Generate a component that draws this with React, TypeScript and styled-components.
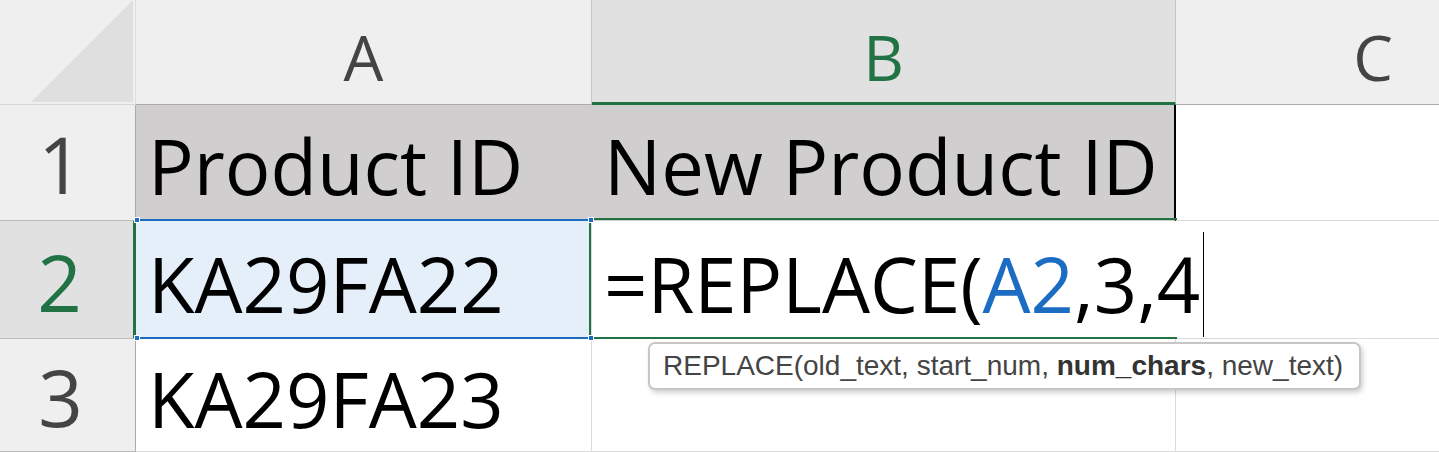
import styled, { createGlobalStyle } from "styled-components";

const GlobalStyle = createGlobalStyle`
  html, body {
    margin: 0;
    padding: 0;
    background: #ffffff;
    overflow: hidden;
  }
  * {
    box-sizing: border-box;
  }
`;

const GREEN = "#217346";
const BLUE = "#1c6dc2";
const GRID = "#dadada";

//=============================== Sheet =========================================
const Sheet = styled.div`
  position: relative;
  width: 1439px;
  height: 452px;
  overflow: hidden;
  display: grid;
  grid-template-columns: 136px 456px 584px 395px;
  grid-template-rows: 105px 116px 118px 1fr;
  font-family: "Open Sans", "Noto Sans", sans-serif;
`;

const Corner = styled.div`
  display: flex;
  justify-content: flex-end;
  align-items: flex-end;
  padding: 0 2px 2px 0;
  background: #efefef;
  border-right: 1px solid #dedede;
  border-bottom: 1px solid #d6d6d6;
`;

const ColHeader = styled.div<{ $active?: boolean }>`
  display: flex;
  justify-content: center;
  align-items: flex-end;
  padding-bottom: ${(p) => (p.$active ? 14 : 16)}px;
  background: ${(p) => (p.$active ? "#e1e1e1" : "#efefef")};
  border-right: 1px solid #c6c6c6;
  border-bottom: ${(p) => (p.$active ? `3px solid ${GREEN}` : "1px solid #ababab")};
  color: ${(p) => (p.$active ? GREEN : "#444444")};
  font-size: 63px;
  line-height: 1;
`;

const RowHeader = styled.div<{ $active?: boolean; $last?: boolean }>`
  display: flex;
  justify-content: center;
  align-items: flex-end;
  padding: 0 14px ${(p) => (p.$last ? 15 : 17)}px 0;
  background: ${(p) => (p.$active ? "#e1e1e1" : "#efefef")};
  border-right: ${(p) => (p.$active ? `3px solid ${GREEN}` : "1px solid #ababab")};
  border-bottom: 1px solid #bdbdbd;
  color: ${(p) => (p.$active ? GREEN : "#444444")};
  font-size: 78px;
  line-height: 1;
`;

const Cell = styled.div<{ $fill?: string; $edge?: string; $lift?: boolean; $last?: boolean }>`
  position: ${(p) => (p.$lift ? "relative" : "static")};
  display: flex;
  align-items: flex-end;
  padding: 0 0 ${(p) => (p.$last ? 14 : 16)}px 12px;
  background: ${(p) => p.$fill || "#ffffff"};
  border-right: ${(p) => p.$edge || `1px solid ${p.$fill || GRID}`};
  border-bottom: 1px solid ${(p) => p.$fill || GRID};
  color: #000000;
  font-size: 76px;
  line-height: 1;
  white-space: nowrap;
`;

//=============================== Selection =====================================
const RefRange = styled.div`
  position: absolute;
  top: -2px;
  bottom: -1px;
  left: 0;
  right: -1px;
  border-top: 2px solid ${BLUE};
  border-bottom: 2px solid ${BLUE};
  pointer-events: none;
`;

const Handle = styled.span<{ $x: "left" | "right"; $y: "top" | "bottom" }>`
  position: absolute;
  ${(p) => p.$x}: -2px;
  ${(p) => p.$y}: -4px;
  width: 6px;
  height: 6px;
  background: ${BLUE};
  border: 1px solid #ffffff;
  z-index: 3;
`;

const ActiveBox = styled.div`
  position: absolute;
  top: -3px;
  left: -3px;
  right: -2px;
  bottom: -1px;
  border-top: 2px solid ${GREEN};
  border-left: 2px solid ${GREEN};
  border-bottom: 2px solid ${GREEN};
  pointer-events: none;
`;

const Formula = styled.span`
  position: relative;
  display: inline-block;
`;

const Ref = styled.span`
  color: ${BLUE};
`;

const Caret = styled.span`
  position: absolute;
  left: calc(100% + 3px);
  top: -14px;
  bottom: -15px;
  width: 1px;
  background: #000000;
`;

//=============================== Tooltip =======================================
const Tooltip = styled.div`
  position: absolute;
  left: 648px;
  top: 342px;
  height: 48px;
  display: flex;
  align-items: center;
  padding: 0 16px 0 13px;
  background: #ffffff;
  border: 2px solid #c6c6c6;
  border-radius: 7px;
  box-shadow: 2px 3px 5px rgba(0, 0, 0, 0.18);
  font-family: "Segoe UI", "Liberation Sans", Arial, sans-serif;
  font-size: 28px;
  color: #444444;
  white-space: nowrap;
  z-index: 5;
`;

const Arg = styled.b`
  color: #333333;
  font-weight: 700;
`;

function App() {
  return (
    <>
      <GlobalStyle />
      <Sheet>
        {/* header row */}
        <Corner>
          <svg width="102" height="102" viewBox="0 0 102 102">
            <polygon points="0,102 102,0 102,102" fill="#dfdfdf" />
          </svg>
        </Corner>
        <ColHeader>A</ColHeader>
        <ColHeader $active>B</ColHeader>
        <ColHeader>C</ColHeader>

        {/* row 1 */}
        <RowHeader>1</RowHeader>
        <Cell $fill="#d0cece">Product ID</Cell>
        <Cell $fill="#d0cece" $edge="2px solid #000000">
          New Product ID
        </Cell>
        <Cell />

        {/* row 2 */}
        <RowHeader $active>2</RowHeader>
        <Cell $fill="#e5eff9" $edge={`1px solid ${GRID}`} $lift>
          KA29FA22
          <RefRange>
            <Handle $x="left" $y="top" />
            <Handle $x="left" $y="bottom" />
            <Handle $x="right" $y="top" />
            <Handle $x="right" $y="bottom" />
          </RefRange>
        </Cell>
        <Cell $edge="1px solid #ffffff" $lift>
          <Formula>
            =REPLACE(<Ref>A2</Ref>,3,4
            <Caret />
          </Formula>
          <ActiveBox />
        </Cell>
        <Cell />

        {/* row 3 */}
        <RowHeader $last>3</RowHeader>
        <Cell $last>KA29FA23</Cell>
        <Cell $last />
        <Cell $last />

        <Tooltip>
          REPLACE(old_text, start_num,&nbsp;<Arg>num_chars</Arg>, new_text)
        </Tooltip>
      </Sheet>
    </>
  );
}

export default App;
